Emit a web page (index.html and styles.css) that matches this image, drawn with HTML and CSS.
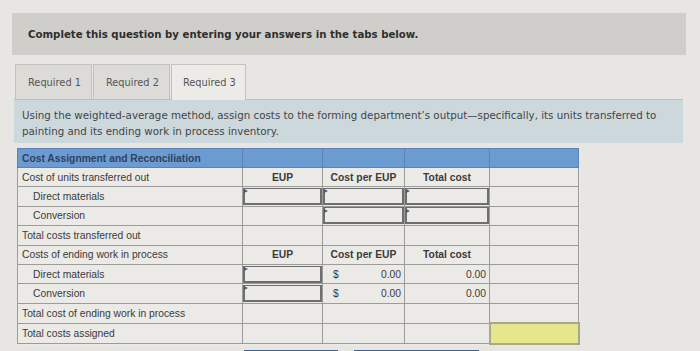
FILE: index.html
```html
<!DOCTYPE html>
<html lang="en">
<head>
  <meta charset="UTF-8">
  <title>Cost Assignment and Reconciliation</title>
  <link rel="stylesheet" href="styles.css">
</head>
<body>

<div class="page">
  <div class="banner">Complete this question by entering your answers in the tabs below.</div>

  <div class="tabs">
    <div class="tab">Required 1</div>
    <div class="tab">Required 2</div>
    <div class="tab active">Required 3</div>
  </div>

  <div class="prompt">
    Using the weighted-average method, assign costs to the forming department&rsquo;s output&mdash;specifically, its units transferred to
    painting and its ending work in process inventory.
  </div>

  <table class="costs">
    <colgroup>
      <col class="c-label">
      <col class="c-eup">
      <col class="c-rate">
      <col class="c-total">
      <col class="c-sum">
    </colgroup>
    <tr class="head">
      <th>Cost Assignment and Reconciliation</th>
      <th></th><th></th><th></th><th></th>
    </tr>
    <tr>
      <td>Cost of units transferred out</td>
      <td class="colhead">EUP</td>
      <td class="colhead">Cost per EUP</td>
      <td class="colhead">Total cost</td>
      <td></td>
    </tr>
    <tr>
      <td class="indent">Direct materials</td>
      <td class="entry"><span class="box"></span></td>
      <td class="entry"><span class="box"></span></td>
      <td class="entry"><span class="box"></span></td>
      <td></td>
    </tr>
    <tr>
      <td class="indent">Conversion</td>
      <td></td>
      <td class="entry"><span class="box"></span></td>
      <td class="entry"><span class="box"></span></td>
      <td></td>
    </tr>
    <tr>
      <td>Total costs transferred out</td>
      <td></td><td></td><td></td><td></td>
    </tr>
    <tr>
      <td>Costs of ending work in process</td>
      <td class="colhead">EUP</td>
      <td class="colhead">Cost per EUP</td>
      <td class="colhead">Total cost</td>
      <td></td>
    </tr>
    <tr>
      <td class="indent">Direct materials</td>
      <td class="entry"><span class="box"></span></td>
      <td class="money"><div class="amount"><span>$</span><span>0.00</span></div></td>
      <td class="num">0.00</td>
      <td></td>
    </tr>
    <tr>
      <td class="indent">Conversion</td>
      <td class="entry"><span class="box"></span></td>
      <td class="money"><div class="amount"><span>$</span><span>0.00</span></div></td>
      <td class="num">0.00</td>
      <td></td>
    </tr>
    <tr>
      <td>Total cost of ending work in process</td>
      <td></td><td></td><td></td><td></td>
    </tr>
    <tr>
      <td>Total costs assigned</td>
      <td></td><td></td><td></td>
      <td class="highlight"></td>
    </tr>
  </table>

  <div class="nav">
    <button class="nav-btn prev" aria-label="Previous tab"></button>
    <button class="nav-btn next" aria-label="Next tab"></button>
  </div>
</div>

</body>
</html>
```

FILE: styles.css
```css
body {
  margin: 0;
  background-color: #e7e6e2;
  font-family: "DejaVu Sans", Verdana, sans-serif;
  color: #333;
  overflow: hidden;
}

.page {
  padding: 13px 14px 0 12px;
}

/* top instruction strip */
.banner {
  height: 42px;
  display: flex;
  align-items: center;
  padding-left: 16px;
  background-color: #cfceca;
  font-size: 10.2px;
  font-weight: bold;
  color: #2e2e2e;
}

.tabs {
  display: flex;
  margin: 9px 0 0 3px;
}

.tab {
  height: 34px;
  display: flex;
  align-items: center;
  padding: 0 10px 0 12px;
  border: 1px solid #c2c1bd;
  border-bottom: none;
  background-color: #dcdbd7;
  font-size: 9.8px;
  color: #555;
}

.tab + .tab {
  margin-left: 1px;
}

.tab.active {
  padding: 0 9px 0 11px;
  background-color: #ecebe8;
  height: 35px;
  margin-bottom: -1px;
}

.prompt {
  margin-left: 2px;
  width: 653px;
  padding: 7px 8px 4px 8px;
  background-color: #cdd8dd;
  border-top: 1px solid #b8c2c6;
  font-size: 10.3px;
  line-height: 16px;
  color: #444;
}

/* cost table */
.costs {
  margin: 5px 0 0 5px;
  width: 561px;
  border-collapse: collapse;
  table-layout: fixed;
  font-family: "Liberation Sans", Arial, sans-serif;
  font-size: 10.3px;
  color: #3a3a3a;
  background-color: #ebeae7;
}

.c-label { width: 225px; }
.c-eup { width: 80px; }
.c-rate { width: 82px; }
.c-total { width: 85px; }
.c-sum { width: 89px; }

.costs td,
.costs th {
  height: 18.4px;
  padding: 0 4px;
  border: 1px solid #9c9c9a;
  white-space: nowrap;
}

.costs .head th {
  height: 18px;
  background-color: #6c9bd2;
  border-color: #5a84b6;
  text-align: left;
  font-weight: bold;
  color: #2f4260;
}

.costs td.indent {
  padding-left: 15px;
}

.costs td.colhead {
  text-align: center;
  font-weight: bold;
}

/* entry cells with the little marker arrow */
.costs td.entry {
  padding: 0;
  position: relative;
}

.box {
  display: block;
  height: 14px;
  border: 2px solid #6e6e6e;
  border-top-width: 1px;
  background-color: #ecebe8;
}

.costs td.entry::before {
  content: "";
  position: absolute;
  left: 1px;
  top: 2px;
  border-left: 4px solid #4b5a6e;
  border-top: 2px solid transparent;
  border-bottom: 2px solid transparent;
}

.costs td.money {
  padding: 0 3px 0 10px;
}

.amount {
  display: flex;
  justify-content: space-between;
}

.costs td.num {
  text-align: right;
  padding-right: 3px;
}

.costs td.highlight {
  background-color: #e6e68d;
  border: 2px solid #a9a88c;
}

/* bottom navigation, mostly below the fold */
.nav {
  display: flex;
  gap: 16px;
  margin: 5px 0 0 232px;
}

.nav-btn {
  height: 30px;
  border: none;
  border-top: 2px solid #3d5f8e;
  background-color: #c9d0d8;
}

.nav-btn.prev { width: 94px; }
.nav-btn.next { width: 125px; }
```
